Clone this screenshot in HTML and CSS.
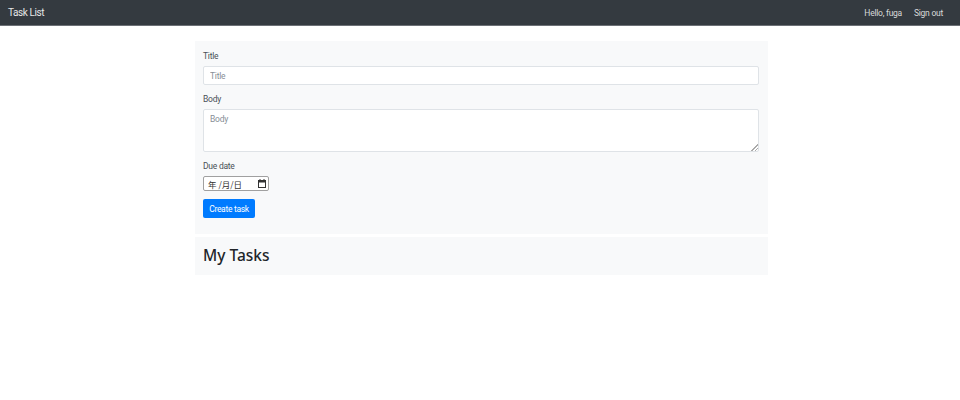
FILE: index.html
```html
<!DOCTYPE html>
<html lang="en">
<head>
    <meta charset="UTF-8">
    <meta name="viewport" content="width=device-width, initial-scale=1.0">
    <title>Task List</title>
    <link rel="stylesheet" href="styles.css">
</head>
<body>
    <nav class="navbar">
        <a class="navbar-brand" href="#">Task List</a>
        <div class="navbar-right">
            <span class="nav-text">Hello, fuga</span>
            <a class="nav-text" href="#">Sign out</a>
        </div>
    </nav>

    <div class="container">
        <form class="panel task-form">
            <div class="form-group">
                <label for="title">Title</label>
                <input class="form-control" id="title" type="text" placeholder="Title">
            </div>
            <div class="form-group">
                <label for="body">Body</label>
                <textarea class="form-control form-area" id="body" placeholder="Body"></textarea>
            </div>
            <div class="form-group">
                <label>Due date</label>
                <div class="date-input">
                    <span class="date-text">年 /月/日</span>
                    <svg class="date-icon" width="8" height="9" viewBox="0 0 8 9">
                        <path d="M2 0v1.5M6 0v1.5" stroke="#333" stroke-width="1" fill="none"/>
                        <rect x="0.5" y="1.5" width="7" height="7" fill="none" stroke="#333"/>
                        <rect x="0.5" y="1.5" width="7" height="2" fill="#333"/>
                    </svg>
                </div>
            </div>
            <button class="btn-primary" type="button">Create task</button>
        </form>

        <div class="panel tasks">
            <h2 class="tasks-title">My Tasks</h2>
        </div>
    </div>
</body>
</html>
```

FILE: styles.css
```css
body {
    margin: 0;
    font-family: Roboto, "Noto Sans", sans-serif;
    background-color: #fff;
    color: #212529;
}

.navbar {
    display: flex;
    align-items: center;
    justify-content: space-between;
    height: 25px;
    padding: 0 17px 0 8px;
    background-color: #343a40;
    border-bottom: 1px solid #6c7076;
}

.navbar-brand {
    font-size: 10px;
    letter-spacing: -0.4px;
    color: #e6e7e8;
    text-decoration: none;
}

.navbar-right {
    display: flex;
    gap: 12px;
}

.nav-text {
    font-size: 8.5px;
    letter-spacing: -0.25px;
    color: #d8d9da;
    text-decoration: none;
}

.container {
    width: 573px;
    margin: 15px 0 0 195px;
}

.panel {
    background-color: #f8f9fa;
}

.task-form {
    height: 193px;
    padding: 8px 9px 0 8px;
    box-sizing: border-box;
    margin-bottom: 3px;
}

.form-group {
    margin-bottom: 7px;
}

label {
    display: block;
    height: 17px;
    font-size: 8.5px;
    letter-spacing: -0.25px;
    line-height: 15px;
    color: #495057;
}

.form-control {
    display: block;
    width: 100%;
    height: 19px;
    box-sizing: border-box;
    padding: 0 6px;
    font-family: inherit;
    font-size: 8.5px;
    letter-spacing: -0.25px;
    background-color: #fff;
    border: 1px solid #dfe3e7;
    border-radius: 2px;
    outline: none;
}

.form-control::placeholder {
    color: #868e96;
}

.form-area {
    height: 43px;
    padding-top: 4px;
    resize: vertical;
}

.form-area::-webkit-resizer {
    background: linear-gradient(135deg, transparent 50%, #aaa 50%, #aaa 60%, transparent 60%, transparent 75%, #aaa 75%, #aaa 85%, transparent 85%) right bottom / 7px 7px no-repeat;
}

.date-input {
    display: flex;
    align-items: center;
    justify-content: space-between;
    width: 66px;
    height: 15px;
    box-sizing: border-box;
    padding: 0 2px 0 4px;
    background-color: #fff;
    border: 1px solid #a0a0a0;
    border-radius: 2px;
}

.date-text {
    font-family: "Noto Sans CJK JP", sans-serif;
    font-size: 8.5px;
    color: #333;
}

.btn-primary {
    display: block;
    width: 52px;
    height: 19px;
    margin-top: 8px;
    padding: 1px 0 0;
    font-family: inherit;
    font-size: 8.5px;
    letter-spacing: -0.3px;
    color: #fff;
    background-color: #007bff;
    border: none;
    border-radius: 2px;
}

.tasks {
    height: 38px;
    padding: 0 8px 2px;
    box-sizing: border-box;
    display: flex;
    align-items: center;
}

.tasks-title {
    margin: 0;
    font-family: "Noto Sans", sans-serif;
    font-size: 15.5px;
    font-weight: 500;
    color: #212529;
}
```
